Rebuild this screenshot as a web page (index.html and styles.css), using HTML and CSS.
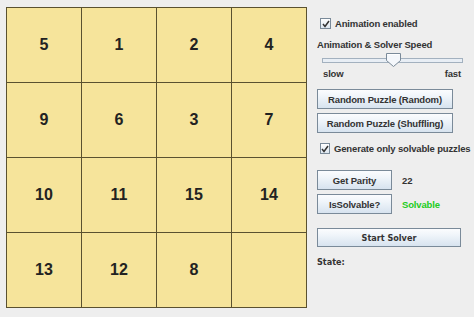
FILE: index.html
```html
<!DOCTYPE html>
<html>
<head>
<meta charset="utf-8">
<link rel="stylesheet" href="styles.css">
</head>
<body>
<div class="app">
  <div class="board">
    <div class="tile">5</div><div class="tile">1</div><div class="tile">2</div><div class="tile">4</div>
    <div class="tile">9</div><div class="tile">6</div><div class="tile">3</div><div class="tile">7</div>
    <div class="tile">10</div><div class="tile">11</div><div class="tile">15</div><div class="tile">14</div>
    <div class="tile">13</div><div class="tile">12</div><div class="tile">8</div><div class="tile"></div>
  </div>
  <div class="panel">
    <label class="check row1">
      <span class="box"><svg width="8" height="8" viewBox="0 0 8 8"><path d="M1 4 L3 6.5 L7 1" fill="none" stroke="#333" stroke-width="1.5"/></svg></span>
      <span>Animation enabled</span>
    </label>
    <div class="label">Animation &amp; Solver Speed</div>
    <div class="slider">
      <div class="track"></div>
      <svg class="thumb" width="15" height="14" viewBox="0 0 15 14"><path d="M0.5 0.5 H14.5 V7.5 L7.5 13.5 L0.5 7.5 Z" fill="#f4f7fb" stroke="#7a8a99"/><path d="M1.5 1.5 H13.5" stroke="#fff"/></svg>
    </div>
    <div class="ticks"><span>slow</span><span>fast</span></div>
    <button class="btn wide b1">Random Puzzle (Random)</button>
    <button class="btn wide b2">Random Puzzle (Shuffling)</button>
    <label class="check row2">
      <span class="box"><svg width="8" height="8" viewBox="0 0 8 8"><path d="M1 4 L3 6.5 L7 1" fill="none" stroke="#333" stroke-width="1.5"/></svg></span>
      <span>Generate only solvable puzzles</span>
    </label>
    <div class="pair p1"><button class="btn small">Get Parity</button><span class="val">22</span></div>
    <div class="pair p2"><button class="btn small">IsSolvable?</button><span class="val ok">Solvable</span></div>
    <button class="btn solver">Start Solver</button>
    <div class="state">State:</div>
  </div>
</div>
</body>
</html>
```
FILE: styles.css
```css
html, body {
  margin: 0;
  padding: 0;
  background: #eeeeee;
  width: 474px;
  height: 317px;
  overflow: hidden;
}
.app {
  display: flex;
  padding: 7px 0 0 6px;
  font-family: "Liberation Sans", Arial, sans-serif;
  font-weight: bold;
  font-size: 9.5px;
  letter-spacing: -0.15px;
  color: #333;
  white-space: nowrap;
}
.board {
  display: grid;
  grid-template-columns: repeat(4, 74px);
  grid-template-rows: repeat(4, 74px);
  gap: 1px;
  padding: 1px;
  background: #5a5130;
  width: 299px;
  height: 299px;
  letter-spacing: 0;
}
.tile {
  background: #f6e49b;
  display: flex;
  align-items: center;
  justify-content: center;
  font-family: "Liberation Sans", Arial, sans-serif;
  font-weight: bold;
  font-size: 16px;
  color: #222;
}
.panel {
  margin-left: 10px;
  width: 146px;
  display: flex;
  flex-direction: column;
  padding-top: 10px;
}
.check {
  display: flex;
  align-items: center;
  height: 13px;
  line-height: 13px;
  gap: 4px;
  padding-left: 3px;
}
.box {
  width: 9px;
  height: 9px;
  border: 1px solid #7a8a99;
  background: linear-gradient(#ffffff, #dce6f0);
  display: flex;
  align-items: center;
  justify-content: center;
}
.label {
  margin-top: 8px;
  height: 14px;
  line-height: 14px;
}
.slider {
  position: relative;
  height: 16px;
}
.track {
  position: absolute;
  left: 5px;
  right: 0;
  top: 6px;
  height: 3px;
  border: 1px solid #a3b1bf;
  background: #e8eef5;
}
.thumb {
  position: absolute;
  left: 69px;
  top: 1px;
}
.ticks {
  display: flex;
  justify-content: space-between;
  height: 12px;
  line-height: 12px;
  padding: 0 2px 0 6px;
}
.btn {
  font-family: "Liberation Sans", Arial, sans-serif;
  font-weight: bold;
  font-size: 9.5px;
  letter-spacing: -0.15px;
  color: #333;
  border: 1px solid #7a8a99;
  background: linear-gradient(#fbfcfe 0%, #f0f5fa 35%, #d7e3ef 100%);
  padding: 0;
  margin: 0;
  height: 20px;
  box-sizing: border-box;
  white-space: nowrap;
}
.wide {
  width: 136px;
}
.b1 { margin-top: 9px; }
.b2 { margin-top: 4px; }
.row2 { margin-top: 9px; }
.pair {
  display: flex;
  align-items: center;
  height: 20px;
  gap: 10px;
}
.p1 { margin-top: 15px; }
.p2 { margin-top: 4px; }
.small {
  width: 75px;
}
.val {
  color: #333;
}
.ok {
  color: #22cc22;
}
.solver {
  margin-top: 14px;
  width: 144px;
  height: 19px;
  font-family: "DejaVu Sans Condensed", "DejaVu Sans", Tahoma, sans-serif;
  font-stretch: condensed;
  font-size: 9px;
  letter-spacing: 0;
}
.state {
  margin-top: 9px;
  height: 12px;
  line-height: 12px;
  font-family: "DejaVu Sans Condensed", "DejaVu Sans", Tahoma, sans-serif;
  font-stretch: condensed;
  font-size: 9px;
  letter-spacing: 0;
}
```
